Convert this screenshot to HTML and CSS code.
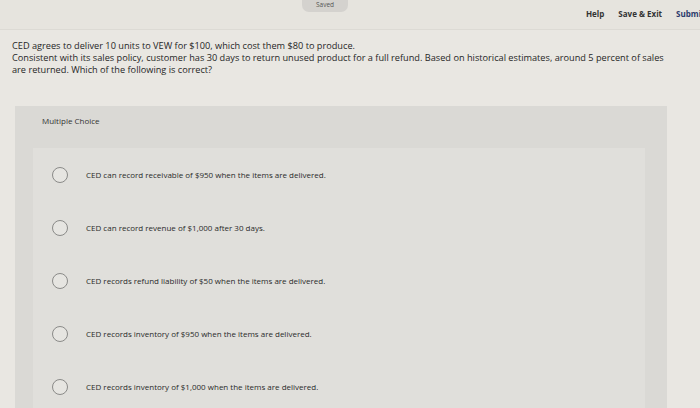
FILE: index.html
```html
<!DOCTYPE html>
<html>
<head>
<meta charset="utf-8">
<link rel="stylesheet" href="styles.css">
</head>
<body>
<div class="page">
  <header class="topbar">
    <div class="saved">Saved</div>
    <nav class="actions">
      <span class="action">Help</span>
      <span class="action">Save &amp; Exit</span>
      <span class="action submit">Submit</span>
    </nav>
  </header>
  <section class="question">
    <p>CED agrees to deliver 10 units to VEW for $100, which cost them $80 to produce.<br>
    Consistent with its sales policy, customer has 30 days to return unused product for a full refund. Based on historical estimates, around 5 percent of sales<br>
    are returned. Which of the following is correct?</p>
  </section>
  <section class="panel">
    <div class="panel-title">Multiple Choice</div>
    <div class="options">
      <label class="option"><span class="radio"></span><span class="opt-text">CED can record receivable of $950 when the items are delivered.</span></label>
      <label class="option"><span class="radio"></span><span class="opt-text">CED can record revenue of $1,000 after 30 days.</span></label>
      <label class="option"><span class="radio"></span><span class="opt-text">CED records refund liability of $50 when the items are delivered.</span></label>
      <label class="option"><span class="radio"></span><span class="opt-text">CED records inventory of $950 when the items are delivered.</span></label>
      <label class="option"><span class="radio"></span><span class="opt-text">CED records inventory of $1,000 when the items are delivered.</span></label>
    </div>
  </section>
</div>
</body>
</html>
```
FILE: styles.css
```css
* { box-sizing: border-box; }
html, body {
  margin: 0;
  padding: 0;
}
body {
  width: 700px;
  height: 408px;
  overflow: hidden;
  background: #e9e7e2;
  font-family: "Open Sans", Lato, "Liberation Sans", sans-serif;
  color: #333;
}
.page {
  width: 700px;
  height: 408px;
  overflow: hidden;
}
.topbar {
  position: relative;
  height: 30px;
  background: #e6e4de;
  border-bottom: 1px solid #dcdad4;
  display: flex;
  align-items: center;
  overflow: hidden;
}
.saved {
  position: absolute;
  top: 0;
  left: 302px;
  width: 46px;
  height: 12px;
  background: #d4d2ce;
  border-radius: 0 0 7px 7px;
  font-size: 6.5px;
  color: #555;
  text-align: center;
  line-height: 10px;
}
.actions {
  display: flex;
  gap: 14px;
  padding-left: 586px;
  padding-bottom: 3px;
  white-space: nowrap;
}
.action {
  font-size: 8px;
  font-weight: 700;
  color: #333;
  white-space: nowrap;
}
.submit {
  color: #2c3b6b;
}
.question {
  padding: 10px 0 0 12px;
}
.question p {
  margin: 0;
  font-size: 9.2px;
  line-height: 12px;
  color: #262626;
}
.panel {
  margin: 30px 0 0 15px;
  width: 652px;
  height: 320px;
  background: #dad9d5;
  padding-top: 9px;
}
.panel-title {
  font-size: 8px;
  color: #333;
  padding-left: 27px;
  line-height: 12px;
}
.options {
  margin: 21px 0 0 18px;
  width: 612px;
  background: #e0dfdb;
}
.option {
  display: flex;
  align-items: center;
  height: 53px;
  padding-left: 19px;
  gap: 18px;
}
.radio {
  width: 16px;
  height: 16px;
  border-radius: 50%;
  border: 1px solid #8a8a88;
  background: #e6e5e1;
  flex: none;
}
.opt-text {
  font-size: 8px;
  color: #2a2a2a;
}
```
